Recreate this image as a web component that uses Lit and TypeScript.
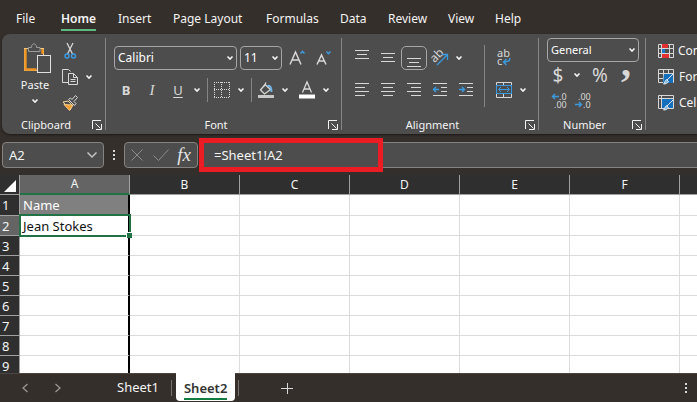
import { LitElement, html, svg, css } from "lit";
import type { TemplateResult, SVGTemplateResult } from "lit";
import { customElement, property, state } from "lit/decorators.js";
import { classMap } from "lit/directives/class-map.js";

const icon = (w: number, h: number, body: SVGTemplateResult) =>
  html`<svg width=${w} height=${h} viewBox="0 0 ${w} ${h}" fill="none" stroke="#d8d8d8" aria-hidden="true">${body}</svg>`;

const lines = (rows: number[][]) =>
  icon(16, 16, svg`${rows.map(([x, y, w]) => svg`<path d="M${x} ${y}.5h${w}"/>`)}`);

const icons = {
  paste: icon(30, 32, svg`
    <rect x="2.5" y="6.500" width="19" height="22" stroke="#f3c988"/>
    <path d="M3.500 7v20.500h11M20.500 7v5" stroke="#ec9320" stroke-width="2.400"/>
    <path d="M6.500 9.500v-4h3c0-5 5-5 5 0h3.500v4z" fill="#4d4d4d" stroke="#9a9a9a"/>
    <rect x="15.500" y="13.500" width="13" height="17" fill="#4d4d4d" stroke="#e0e0e0"/>`),
  cut: icon(16, 18, svg`
    <path d="M5 1l5.500 11M11 1L5.500 12" stroke-width="1.300"/>
    <circle cx="5" cy="14" r="2" stroke="#3c9ade" stroke-width="1.500"/>
    <circle cx="11.500" cy="14" r="2" stroke="#3c9ade" stroke-width="1.500"/>`),
  copy: icon(18, 17, svg`
    <path d="M7 13.500H1.500V.500h6l2 2" />
    <path d="M7.500 4.500h5l4 4v7h-9zM12.500 4.500v4h4M9.500 10.500h5M9.500 12.500h5"/>`),
  brush: icon(18, 18, svg`
    <path d="M2 8l8 8M2 8l5-1 4.500 4.500L9 16z" fill="#4d4d4d" stroke="#f0cf96"/>
    <path d="M3 10.500l9 .5-3.500 5.500z" fill="#f0a030" stroke="#f3c988"/>
    <path d="M7.500 5.500l6 6 1.500-2-2-2 3.500-4-2-2-3.500 4-1.500-1.500z" fill="#4d4d4d"/>`),
  launcher: icon(10, 10, svg`<path d="M.500 9V.500H9M9.500 4v5.500H4M3.500 3.500l5 5" stroke="#f2f2f2"/>`),
  borders: icon(16, 16, svg`
    <path d="M.500 0v16M15.500 0v16M0 .500h16M0 15.500h16M7.500 0v16M0 7.500h16" stroke-dasharray="1 1"/>`),
  fill: icon(18, 18, svg`
    <path d="M9 1.500l-2 4M8 3.500l5.500 5-6 4.500-4-4z" stroke-width="1.300"/>
    <path d="M10.500 5c3-1 4 2 4 6" stroke="#6fb4e6" stroke-width="2"/>
    <path d="M1 15.500h16" stroke="#c8c8c8" stroke-width="3"/>`),
  fontColor: icon(18, 18, svg`
    <path d="M4.500 11.500L9 1l4.500 10.500M6 8h6" stroke-width="1.300"/>
    <path d="M1 15.500h16" stroke="#fff" stroke-width="4"/>`),
  grow: icon(17, 18, svg`
    <path d="M1 15.500L6.500 3 12 15.500M3 11h7" stroke-width="1.500"/>
    <path d="M11.500 4.500l2-2 2 2" stroke="#3c9ade" stroke-width="1.600"/>`),
  shrink: icon(17, 18, svg`
    <path d="M2 15.500L6.500 6 11 15.500M3.500 12h6" stroke-width="1.500"/>
    <path d="M11.500 2.500l2 2 2-2" stroke="#3c9ade" stroke-width="1.600"/>`),
  top: lines([[1, 1, 14], [3, 5, 10], [1, 9, 14]]),
  middle: lines([[1, 4, 14], [3, 8, 10], [1, 12, 14]]),
  bottom: lines([[1, 8, 14], [3, 12, 10], [1, 16, 14]]),
  left: lines([[1, 1, 14], [1, 5, 10], [1, 9, 14], [1, 13, 10]]),
  center: lines([[1, 1, 14], [3, 5, 10], [1, 9, 14], [3, 13, 10]]),
  right: lines([[1, 1, 14], [5, 5, 10], [1, 9, 14], [5, 13, 10]]),
  outdent: icon(16, 16, svg`
    <path d="M1 1.500h14M9 5.500h6M9 9.500h6M1 13.500h14"/>
    <path d="M7 7.500H1.500M4 5L1.500 7.500 4 10" stroke="#3c9ade" stroke-width="1.400"/>`),
  indent: icon(16, 16, svg`
    <path d="M1 1.500h14M9 5.500h6M9 9.500h6M1 13.500h14"/>
    <path d="M1 7.500h5.500M4 5l2.500 2.500L4 10" stroke="#3c9ade" stroke-width="1.400"/>`),
  orient: icon(18, 18, svg`
    <text x="1" y="12" transform="rotate(-45 5 10)" font-size="12" fill="#d8d8d8" stroke="none">ab</text>
    <path d="M6 16L16 6M11 5.500h5.500V11" stroke="#3c9ade" stroke-width="1.300"/>`),
  wrap: icon(16, 18, svg`
    <text x="1" y="8" font-size="11" fill="#d8d8d8" stroke="none">ab</text>
    <text x="1" y="16" font-size="11" fill="#d8d8d8" stroke="none">c</text>
    <path d="M14 9c0 3-2 4-6 4M10.500 10L7.500 13l3 3" stroke="#3c9ade" stroke-width="1.400"/>`),
  merge: icon(16, 16, svg`
    <path d="M.500.500h15v15H.500zM7.500 0v4M7.500 12v4"/>
    <rect x=".500" y="3.500" width="15" height="8" fill="#4d4d4d" stroke="#3c9ade"/>
    <path d="M3 7.500h10M5 5L2.500 7.500 5 10M11 5l2.500 2.500L11 10" stroke="#3c9ade"/>`),
  incDecimal: icon(16, 18, svg`
    <path d="M8 4.500H1.500M4 2L1.500 4.500 4 7" stroke="#3c9ade" stroke-width="1.400"/>
    <text x="8" y="8" font-size="9" fill="#d8d8d8" stroke="none">.0</text>
    <text x="3" y="16" font-size="9" fill="#d8d8d8" stroke="none">.00</text>`),
  decDecimal: icon(16, 18, svg`
    <text x="3" y="8" font-size="9" fill="#d8d8d8" stroke="none">.00</text>
    <path d="M0 12.500h6.500M4 10l2.500 2.500L4 15" stroke="#3c9ade" stroke-width="1.400"/>
    <text x="8" y="16" font-size="9" fill="#d8d8d8" stroke="none">.0</text>`),
  conditional: icon(16, 15, svg`
    <path d="M.500.500h15v13H.500zM0 4.500h16M0 9.500h16M3.500 0v14M11.500 0v14"/>
    <path d="M4 0h6v4H4zM4 10h7v4H4z" fill="#e03030" stroke="none"/>
    <path d="M4 5h3v4H4z" fill="#1f78c8" stroke="none"/>`),
  format: icon(17, 16, svg`
    <path d="M.500.500h15v13H.500zM0 4.500h16M0 9.500h16M5.500 0v14M10.500 0v14"/>
    <path d="M6 5h9v9H5z" fill="#1470bd" stroke="none"/>
    <path d="M15.500 4.500L9 11M8.500 10.500l2 2c-1 2-3 2.500-5 2.500 1.500-1 1-3 3-4.500z" stroke="#e4e4e4" fill="#7fc0ee"/>`),
  cellStyles: icon(17, 16, svg`
    <path d="M.500.500h15v13H.500zM0 3.500h16M3.500 0v14"/>
    <path d="M4 4h11v9H4z" fill="#1470bd" stroke="none"/>
    <path d="M15.500 4.500L9 11M8.500 10.500l2 2c-1 2-3 2.500-5 2.500 1.500-1 1-3 3-4.500z" stroke="#e4e4e4" fill="#7fc0ee"/>`),
  chevron: icon(8, 6, svg`<path d="M1.500 1.500L4 4l2.500-2.500" stroke="#f4f4f4" stroke-width="1.600"/>`),
  wideChevron: icon(12, 8, svg`<path d="M1.500 1.500L6 6l4.500-4.500" stroke="#c4c4c4" stroke-width="1.500"/>`),
  cancel: icon(14, 14, svg`<path d="M1.500 1.500l11 11M12.500 1.500l-11 11" stroke="#8c8c8c"/>`),
  accept: icon(18, 14, svg`<path d="M1.500 7.500l5 5 10-11" stroke="#8c8c8c"/>`),
  prev: icon(8, 10, svg`<path d="M6.500 1L2 5l4.500 4" stroke="#9a9693" stroke-width="1.300"/>`),
  next: icon(8, 10, svg`<path d="M1.500 1L6 5 1.500 9" stroke="#9a9693" stroke-width="1.300"/>`),
  plus: icon(12, 12, svg`<path d="M0 6.500h12M6.500 1v11"/>`),
  corner: icon(12, 12, svg`<path d="M12 0v12H0z" fill="#fff" stroke="none"/>`),
  dots: icon(4, 12, svg`<path d="M1 2h2M1 6h2M1 10h2" stroke-width="2"/>`),
};

const base = css`
  * { box-sizing: border-box; }
  svg { display: block; flex: none; overflow: visible; }
  button, input, select {
    margin: 0; padding: 0; border: 0; background: none;
    color: inherit; font: inherit; outline: none;
  }
`;

@customElement("ribbon-select")
class RibbonSelect extends LitElement {
  @property() label = "";
  @property() value = "";

  static styles = [base, css`
    :host { display: block; }
    .box { display: grid; height: 24px; align-items: center; border: 1px solid #a6a6a6; border-radius: 4px; }
    .box > * { grid-area: 1 / 1; }
    select { appearance: none; width: 100%; height: 22px; padding: 0 16px 0 3px; color: #fff; }
    svg { justify-self: end; margin-right: 2px; pointer-events: none; }
  `];

  render() {
    return html`<div class="box">
      <select aria-label=${this.label}><option>${this.value}</option></select>
      ${icons.chevron}
    </div>`;
  }
}

@customElement("app-root")
class AppRoot extends LitElement {
  @state() private activeTab = "Home";
  @state() private activeSheet = "Sheet2";

  private tabs = ["File", "Home", "Insert", "Page Layout", "Formulas", "Data", "Review", "View", "Help"];
  private columns = ["A", "B", "C", "D", "E", "F", "G"];
  private cells: Record<string, string> = { A1: "Name", A2: "Jean Stokes" };

  static styles = [base, css`
    :host {
      display: flex; flex-direction: column; height: 100vh; overflow: hidden;
      background: #342f2b; color: #f4f4f4;
      font: 12px/16px "Noto Sans", "Open Sans", sans-serif;
    }
    .tabs {
      display: grid; flex: none; height: 34px; padding: 11px 0 0 16px;
      grid-template-columns: 45px 57px 55px 93px 74px 48px 60px 47px auto;
      justify-content: start; justify-items: start; align-items: start;
    }
    .tab { height: 20px; line-height: 16px; border-bottom: 2px solid transparent; padding-bottom: 2px; white-space: nowrap; }
    .tab.active { font-weight: 600; border-color: #5fb985; }

    .ribbon {
      display: flex; flex: none; height: 100px; margin-left: 2px; overflow: hidden;
      background: #4d4d4d; border-radius: 8px 0 0 8px; box-shadow: 0 1px 2px #1c1a18;
      font-size: 11px;
    }
    .group { display: flex; flex: none; flex-direction: column; padding: 4px 0 5px; }
    .group + .group { border-left: 1px solid #858585; border-image: linear-gradient(transparent 5px, #858585 5px 95px, transparent 95px) 1; }
    .group-body { display: flex; flex: 1; }
    .group-foot { display: grid; grid-template-columns: 1fr auto; align-items: center; height: 12px; padding-right: 3px; }
    .group-name { padding-right: 2px; text-align: center; }
    .clipboard { width: 103px; }
    .font { width: 236px; }
    .alignment { width: 197px; }
    .number { width: 107px; }
    .styles { width: 130px; }

    .row, .split { display: flex; align-items: center; }
    .split + .split { margin-left: 3px; }
    .stack { display: flex; flex-direction: column; }
    .tool { display: flex; flex: none; width: 26px; height: 26px; align-items: center; justify-content: center; }
    .drop { display: flex; flex: none; width: 12px; height: 26px; align-items: center; justify-content: center; }
    .letter { font-size: 13px; color: #d8d8d8; }
    .bold { font-weight: 700; }
    .italic { font-family: "Liberation Serif", serif; font-style: italic; font-size: 15px; }
    .underline { text-decoration: underline; text-underline-offset: 2px; }
    .rule { flex: none; width: 1px; height: 24px; background: #858585; }
    .font .rule { margin: 0 1px 0 4px; }
    .tall { height: 62px; }

    .paste { display: flex; flex-direction: column; align-items: center; width: 38px; margin: 4px 3px 0 14px; font-size: 11px; }
    .paste-label { margin: 3px 0 5px; }
    .paste svg:first-child { margin-left: 4px; }

    .font .stack, .alignment .stack { gap: 6px; padding-top: 7px; }
    .font .stack { padding-left: 8px; }
    .font .stack > .row:last-child { margin-left: -1px; }
    .font-name { width: 123px; margin-right: 3px; font-size: 12px; }
    .font-size { width: 42px; margin-right: 2px; font-size: 12px; }
    .selected { height: 24px; border: 1px solid #a6a6a6; border-radius: 5px; }
    .lift svg { margin-top: -2px; }
    .alignment .stack { padding-left: 7px; }
    .alignment .rule { margin: 7px 0 0 5px; }
    .alignment .rule + .stack { padding-left: 6px; }
    .alignment .row { height: 26px; }

    .number .stack { padding-left: 8px; }
    .format-name { width: 92px; }
    .symbols { display: grid; grid-template-columns: 22px 12px 30px 18px; gap: 2px; height: 27px; }
    .symbols .tool { width: auto; }
    .symbol { font-size: 19px; line-height: 20px; color: #d8d8d8; }
    .comma { font: 700 40px/2px "Liberation Serif", serif; align-items: flex-start; }
    .decimals { height: 24px; }
    .decimals .tool { width: 24px; }

    .styles .stack { padding-left: 12px; }
    .style-row { display: flex; align-items: center; gap: 4px; height: 26px; font-size: 12px; white-space: nowrap; }

    .formula-bar { display: flex; flex: none; align-items: center; height: 41px; padding: 1px 0 0 2px; font-size: 13px; }
    .name-box, .fx-box, .formula { display: flex; align-items: center; height: 26px; background: #4d4d4d; border: 1px solid #85827f; border-radius: 4px; }
    .name-box { width: 102px; padding: 0 5px 0 6px; }
    .name-box input { flex: 1; min-width: 0; }
    .grip { margin: 0 8px; }
    .fx-box { width: 74px; padding: 0 6px 0 5px; justify-content: space-between; }
    .fx { font: italic 19px/20px "Liberation Serif", serif; color: #e4e4e4; }
    .formula { position: relative; flex: 1; margin-left: 2px; border-right: 0; border-radius: 4px 0 0 4px; }
    .formula input { width: 100%; padding-left: 13px; }
    .highlight { position: absolute; left: -2px; top: -5px; width: 184px; height: 34px; border: 5px solid #ec1c24; pointer-events: none; }

    .sheet { flex: 1; min-height: 0; overflow: hidden; background: #fff; }
    table { width: 790px; table-layout: fixed; border-collapse: separate; border-spacing: 0; color: #111; font-size: 13px; line-height: 18px; }
    th, td { height: 20px; padding: 0; font-weight: 400; white-space: nowrap; border-right: 1px solid #dcdcdc; border-bottom: 1px solid #dcdcdc; }
    th { background: #2f2f2f; color: #f4f4f4; border-color: #a0a0a0; font-size: 12px; }
    tbody tr:first-child > * { height: 21px; }
    thead th:first-child { width: 20px; padding: 3px 0 0 4px; }
    tbody th { padding-left: 2px; text-align: left; font-size: 13px; }
    th.current { background: #646464; }
    thead th.current { border-bottom: 2px solid #217346; }
    td { padding-left: 3px; }
    td.edge { border-right: 2px solid #000; }
    td.heading { background: #808080; color: #fff; }
    td.cursor { position: relative; }
    .cursor-box { position: absolute; left: -1px; top: -2px; right: -3px; bottom: -2px; border: 2px solid #217346; }
    .handle { position: absolute; right: -4px; bottom: -3px; width: 6px; height: 6px; background: #217346; border: 1px solid #fff; border-width: 1px 0 0 1px; }

    .sheets { display: flex; flex: none; align-items: center; height: 29px; padding: 0 9px 0 21px; border-top: 1px solid #4a4643; }
    .move { display: flex; width: 33px; height: 28px; align-items: center; }
    .sheet-tabs { display: flex; height: 29px; margin: -1px 0 0 22px; align-items: center; font-size: 13px; }
    .sheet-tab { height: 28px; padding: 2px 8px 0; }
    .sheet-tab.active { padding-top: 5px; margin: 0 3px 1px 4px; color: #333; background: #fff; border-radius: 0 0 4px 4px; font-weight: 600; }
    .sheet-tab span { display: block; height: 20px; line-height: 16px; }
    .sheet-tab.active span { border-bottom: 2px solid #107c41; }
    .sheet-tabs .rule { height: 16px; background: #77726f; margin-left: 4px; }
    .sheet-tabs .rule:last-child { margin-left: 0; }
    .add { display: flex; margin-left: 42px; }
    .more { display: flex; margin-left: auto; }
  `];

  private tool(label: string, content: unknown, extra = "") {
    return html`<button class="tool ${extra}" aria-label=${label}>${content}</button>`;
  }

  private drop(label: string) {
    return html`<button class="drop" aria-label=${label}>${icons.chevron}</button>`;
  }

  private group(id: string, name: string, body: TemplateResult) {
    return html`<section class="group ${id}">
      <div class="group-body">${body}</div>
      <div class="group-foot">
        <span class="group-name">${name}</span>
        ${name ? html`<button aria-label="${name} settings">${icons.launcher}</button>` : ""}
      </div>
    </section>`;
  }

  private renderRibbon() {
    return html`<div class="ribbon">
      ${this.group("clipboard", "Clipboard", html`
        <button class="paste">${icons.paste}<span class="paste-label">Paste</span>${icons.chevron}</button>
        <div class="stack">
          ${this.tool("Cut", icons.cut)}
          <div class="row">${this.tool("Copy", icons.copy)}${this.drop("Copy options")}</div>
          ${this.tool("Format painter", icons.brush)}
        </div>`)}
      ${this.group("font", "Font", html`
        <div class="stack">
          <div class="row">
            <ribbon-select class="font-name" label="Font name" value="Calibri"></ribbon-select>
            <ribbon-select class="font-size" label="Font size" value="11"></ribbon-select>
            ${this.tool("Increase font size", icons.grow)}
            ${this.tool("Decrease font size", icons.shrink)}
          </div>
          <div class="row">
            ${this.tool("Bold", "B", "letter bold")}
            ${this.tool("Italic", "I", "letter italic")}
            ${this.tool("Underline", "U", "letter underline")}
            ${this.drop("Underline options")}
            <span class="rule"></span>
            ${this.tool("Borders", icons.borders)}
            ${this.drop("Border options")}
            <span class="rule"></span>
            <div class="split">${this.tool("Fill colour", icons.fill)}${this.drop("Fill options")}</div>
            <div class="split">${this.tool("Font colour", icons.fontColor)}${this.drop("Font colour options")}</div>
          </div>
        </div>`)}
      ${this.group("alignment", "Alignment", html`
        <div class="stack">
          <div class="row">
            ${this.tool("Top align", icons.top, "lift")}
            ${this.tool("Middle align", icons.middle, "lift")}
            ${this.tool("Bottom align", icons.bottom, "selected")}
            ${this.tool("Orientation", icons.orient)}
            ${this.drop("Orientation options")}
          </div>
          <div class="row">
            ${this.tool("Align left", icons.left)}
            ${this.tool("Centre", icons.center)}
            ${this.tool("Align right", icons.right)}
            ${this.tool("Decrease indent", icons.outdent)}
            ${this.tool("Increase indent", icons.indent)}
          </div>
        </div>
        <span class="rule tall"></span>
        <div class="stack">
          <div class="row">${this.tool("Wrap text", icons.wrap)}</div>
          <div class="row">${this.tool("Merge", icons.merge)}${this.drop("Merge options")}</div>
        </div>`)}
      ${this.group("number", "Number", html`
        <div class="stack">
          <ribbon-select class="format-name" label="Number format" value="General"></ribbon-select>
          <div class="symbols">
            ${this.tool("Currency", "$", "symbol")}
            ${this.drop("Currency options")}
            ${this.tool("Percent", "%", "symbol")}
            ${this.tool("Comma style", ",", "symbol comma")}
          </div>
          <div class="row decimals">
            ${this.tool("Increase decimal", icons.incDecimal)}
            ${this.tool("Decrease decimal", icons.decDecimal)}
          </div>
        </div>`)}
      ${this.group("styles", "", html`
        <div class="stack">
          <button class="style-row">${icons.conditional} Conditional Formatting</button>
          <button class="style-row">${icons.format} Format as Table</button>
          <button class="style-row">${icons.cellStyles} Cell Styles</button>
        </div>`)}
    </div>`;
  }

  private renderCell(column: string, row: number) {
    const text = this.cells[column + row] ?? "";
    const cursor = column === "A" && row === 2;
    return html`<td class=${classMap({ edge: column === "A", heading: column + row === "A1", cursor })}>
      ${text}${cursor ? html`<span class="cursor-box"></span><span class="handle"></span>` : ""}
    </td>`;
  }

  render() {
    return html`
      <nav class="tabs">
        ${this.tabs.map((name) => html`<button
          class=${classMap({ tab: true, active: name === this.activeTab })}
          @click=${() => (this.activeTab = name)}>${name}</button>`)}
      </nav>
      ${this.renderRibbon()}
      <div class="formula-bar">
        <div class="name-box">
          <input aria-label="Name box" .value=${"A2"} />
          <button aria-label="Named ranges">${icons.wideChevron}</button>
        </div>
        <span class="grip">${icons.dots}</span>
        <div class="fx-box">
          <button aria-label="Cancel">${icons.cancel}</button>
          <button aria-label="Enter">${icons.accept}</button>
          <button class="fx" aria-label="Insert function">fx</button>
        </div>
        <div class="formula">
          <input aria-label="Formula" .value=${"=Sheet1!A2"} />
          <span class="highlight"></span>
        </div>
      </div>
      <div class="sheet">
        <table>
          <thead>
            <tr>
              <th>${icons.corner}</th>
              ${this.columns.map((c) => html`<th class=${classMap({ current: c === "A" })}>${c}</th>`)}
            </tr>
          </thead>
          <tbody>
            ${[1, 2, 3, 4, 5, 6, 7, 8, 9].map((row) => html`<tr>
              <th class=${classMap({ current: row === 2 })}>${row}</th>
              ${this.columns.map((c) => this.renderCell(c, row))}
            </tr>`)}
          </tbody>
        </table>
      </div>
      <footer class="sheets">
        <button class="move" aria-label="Previous sheet">${icons.prev}</button>
        <button class="move" aria-label="Next sheet">${icons.next}</button>
        <div class="sheet-tabs">
          ${["Sheet1", "Sheet2"].map((name) => html`<button
            class=${classMap({ "sheet-tab": true, active: name === this.activeSheet })}
            @click=${() => (this.activeSheet = name)}><span>${name}</span></button><span class="rule"></span>`)}
        </div>
        <button class="add" aria-label="New sheet">${icons.plus}</button>
        <button class="more" aria-label="More">${icons.dots}</button>
      </footer>
    `;
  }
}
